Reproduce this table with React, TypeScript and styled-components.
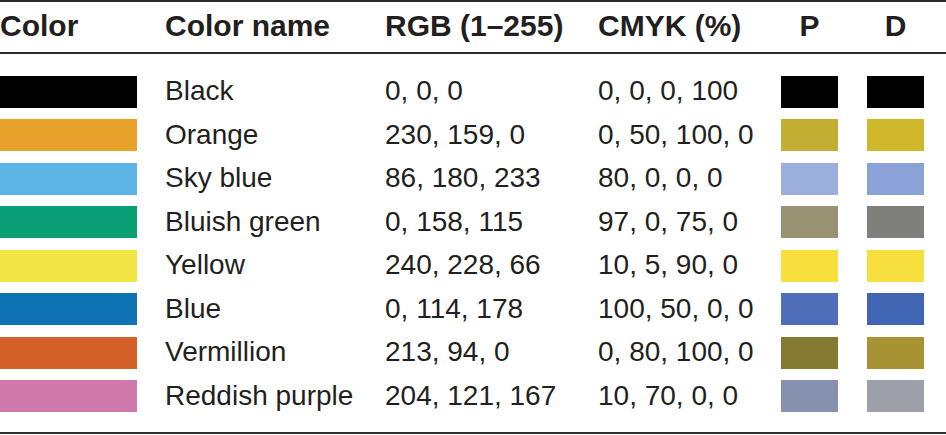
import React from 'react';
import styled, { createGlobalStyle } from 'styled-components';

const GlobalStyle = createGlobalStyle`
  html, body {
    margin: 0;
    padding: 0;
    background: #ffffff;
  }
  body {
    font-family: 'Liberation Sans', Arial, Helvetica, sans-serif;
    color: #231f20;
  }
`;

type ColorRow = {
  swatch: string;
  name: string;
  rgb: string;
  cmyk: string;
  p: string;
  d: string;
};

const rows: ColorRow[] = [
  { swatch: '#000000', name: 'Black', rgb: '0, 0, 0', cmyk: '0, 0, 0, 100', p: '#000000', d: '#000000' },
  { swatch: '#e8a12a', name: 'Orange', rgb: '230, 159, 0', cmyk: '0, 50, 100, 0', p: '#c1ae33', d: '#cfb82c' },
  { swatch: '#5cb5e5', name: 'Sky blue', rgb: '86, 180, 233', cmyk: '80, 0, 0, 0', p: '#9aafdc', d: '#8aa2d7' },
  { swatch: '#0a9f74', name: 'Bluish green', rgb: '0, 158, 115', cmyk: '97, 0, 75, 0', p: '#9a9373', d: '#7f7f7b' },
  { swatch: '#f1e646', name: 'Yellow', rgb: '240, 228, 66', cmyk: '10, 5, 90, 0', p: '#f9e03c', d: '#f7df3d' },
  { swatch: '#0f72b3', name: 'Blue', rgb: '0, 114, 178', cmyk: '100, 50, 0, 0', p: '#4f6db8', d: '#4065b2' },
  { swatch: '#d6602a', name: 'Vermillion', rgb: '213, 94, 0', cmyk: '0, 80, 100, 0', p: '#857a32', d: '#a79333' },
  { swatch: '#cf7aab', name: 'Reddish purple', rgb: '204, 121, 167', cmyk: '10, 70, 0, 0', p: '#8690af', d: '#9da0a8' },
];

export default function App() {
  return (
    <>
      <GlobalStyle />
      <Table>
        <HeaderRow>
          <HeadCell>Color</HeadCell>
          <HeadCell>Color name</HeadCell>
          <HeadCell>RGB (1–255)</HeadCell>
          <HeadCell>CMYK (%)</HeadCell>
          <HeadCell $center>P</HeadCell>
          <HeadCell $center>D</HeadCell>
        </HeaderRow>
        <Body>
          {rows.map((r) => (
            <Row key={r.name}>
              <Swatch $color={r.swatch} $width={137} />
              <Cell>{r.name}</Cell>
              <Cell>{r.rgb}</Cell>
              <Cell>{r.cmyk}</Cell>
              <Swatch $color={r.p} $width={57} />
              <Swatch $color={r.d} $width={57} />
            </Row>
          ))}
        </Body>
      </Table>
    </>
  );
}

const columns = '165px 220px 213px 183px 86px 79px';

const Table = styled.div`
  width: 946px;
  border-top: 2px solid #2e2e2e;
  border-bottom: 2px solid #2e2e2e;
`;

const HeaderRow = styled.div`
  display: grid;
  grid-template-columns: ${columns};
  align-items: center;
  height: 52px;
  padding-top: 2px;
  padding-bottom: 4px;
  box-sizing: border-box;
  border-bottom: 2px solid #2e2e2e;
`;

const HeadCell = styled.div<{ $center?: boolean }>`
  font-size: 30px;
  font-weight: bold;
  white-space: nowrap;
  width: ${(p) => (p.$center ? '57px' : 'auto')};
  text-align: ${(p) => (p.$center ? 'center' : 'left')};
`;

const Body = styled.div`
  padding: 16px 0 14px;
`;

const Row = styled.div`
  display: grid;
  grid-template-columns: ${columns};
  align-items: center;
  height: 43.5px;
`;

const Cell = styled.div`
  font-size: 28px;
  line-height: 43.5px;
  white-space: nowrap;
  margin-top: -2px;
`;

const Swatch = styled.div<{ $color: string; $width: number }>`
  width: ${(p) => p.$width}px;
  height: 32px;
  background: ${(p) => p.$color};
`;
